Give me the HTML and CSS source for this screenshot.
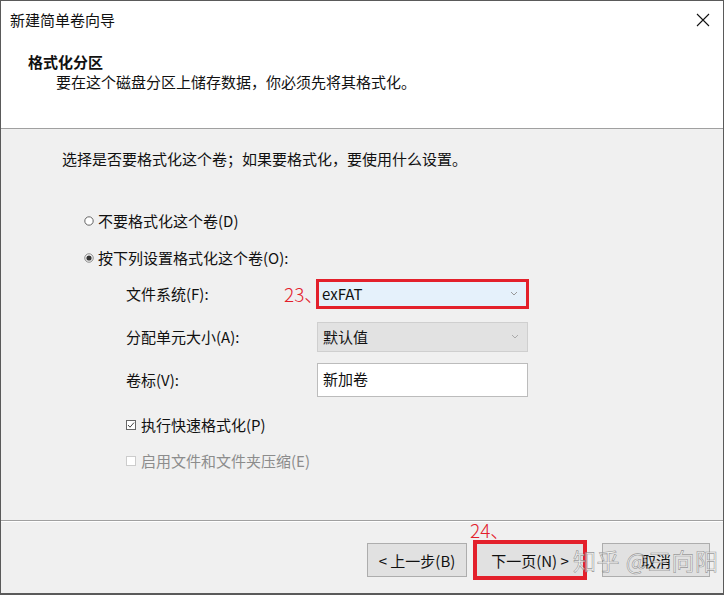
FILE: index.html
```html
<!DOCTYPE html>
<html lang="zh-CN">
<head>
    <meta charset="UTF-8">
    <meta name="viewport" content="width=device-width, initial-scale=1.0">
    <title>新建简单卷向导</title>
    <link rel="stylesheet" href="styles.css">
</head>
<body>

<div class="window">
    <div class="titlebar">
        <span class="title">新建简单卷向导</span>
        <svg class="close" width="14" height="14" viewBox="0 0 14 14">
            <path d="M1 1 L13 13 M13 1 L1 13" stroke="#111" stroke-width="1.1" fill="none"/>
        </svg>
    </div>

    <div class="header">
        <div class="heading">格式化分区</div>
        <div class="subheading">要在这个磁盘分区上储存数据，你必须先将其格式化。</div>
    </div>

    <div class="content">
        <p class="intro">选择是否要格式化这个卷；如果要格式化，要使用什么设置。</p>

        <div class="option">
            <svg class="radio" width="10" height="10" viewBox="0 0 10 10">
                <circle cx="5" cy="5" r="4.2" fill="#fff" stroke="#555" stroke-width="0.9"/>
            </svg>
            <span>不要格式化这个卷(D)</span>
        </div>
        <div class="option">
            <svg class="radio" width="10" height="10" viewBox="0 0 10 10">
                <circle cx="5" cy="5" r="4.2" fill="#fff" stroke="#777" stroke-width="0.9"/>
                <circle cx="5" cy="5" r="2.6" fill="#333"/>
            </svg>
            <span>按下列设置格式化这个卷(O):</span>
        </div>

        <div class="settings">
            <label>文件系统(F):</label>
            <div class="field">
                <span class="note note-fs">23、</span>
                <div class="select marked">
                    <span>exFAT</span>
                    <svg class="chevron" width="8" height="5" viewBox="0 0 8 5"><path d="M1 1 L4 4 L7 1" stroke="#999" fill="none"/></svg>
                </div>
            </div>

            <label>分配单元大小(A):</label>
            <div class="field">
                <div class="select disabled">
                    <span>默认值</span>
                    <svg class="chevron" width="8" height="5" viewBox="0 0 8 5"><path d="M1 1 L4 4 L7 1" stroke="#aaa" fill="none"/></svg>
                </div>
            </div>

            <label>卷标(V):</label>
            <div class="field">
                <div class="textbox">新加卷</div>
            </div>
        </div>

        <div class="check">
            <svg class="box" width="10" height="10" viewBox="0 0 10 10">
                <rect x="0.5" y="0.5" width="9" height="9" fill="#fff" stroke="#666"/>
                <path d="M2 5 L4 7.2 L8 2.6" stroke="#444" stroke-width="1" fill="none"/>
            </svg>
            <span>执行快速格式化(P)</span>
        </div>
        <div class="check disabled-text">
            <svg class="box" width="10" height="10" viewBox="0 0 10 10">
                <rect x="0.5" y="0.5" width="9" height="9" fill="#fff" stroke="#ccc"/>
            </svg>
            <span>启用文件和文件夹压缩(E)</span>
        </div>
    </div>

    <div class="footer">
        <span class="note note-next">24、</span>
        <button class="btn">&lt; 上一步(B)</button>
        <button class="btn marked-btn">下一页(N) &gt;</button>
        <button class="btn cancel">取消</button>
        <span class="watermark">知乎 @三向阳</span>
    </div>
</div>

</body>
</html>
```

FILE: styles.css
```css
* {
    box-sizing: border-box;
}
body {
    margin: 0;
    font-family: "Noto Sans CJK SC", "Microsoft YaHei", sans-serif;
    font-size: 15px;
    color: #111;
    background: #fff;
}
.window {
    width: 724px;
    height: 595px;
    border: 1px solid #5a5a5a;
    border-bottom-width: 2px;
    display: flex;
    flex-direction: column;
    background: #f0f0f0;
    position: relative;
    overflow: hidden;
}
.titlebar {
    height: 37px;
    background: #fff;
    display: flex;
    align-items: center;
    justify-content: space-between;
    padding: 0 13px 0 9px;
}
.title {
    line-height: 20px;
}
.header {
    height: 91px;
    background: #fff;
    border-bottom: 1px solid #a0a0a0;
    padding: 14px 0 0 27px;
}
.heading {
    font-weight: bold;
    line-height: 20px;
}
.subheading {
    line-height: 20px;
    padding-left: 28px;
}
.content {
    flex: 1;
    padding: 20px 0 0 61px;
}
.intro {
    margin: 0;
    line-height: 20px;
}
.option {
    display: flex;
    align-items: center;
    gap: 4px;
    line-height: 20px;
    margin-left: 22px;
    margin-top: 17px;
}
.option:first-of-type {
    margin-top: 42px;
}
.settings {
    display: grid;
    grid-template-columns: 191px 211px;
    grid-auto-rows: 43px;
    align-items: center;
    margin: 4px 0 0 64px;
}
.field {
    position: relative;
}
.select {
    height: 30px;
    display: flex;
    align-items: center;
    justify-content: space-between;
    padding: 0 8px 0 5px;
    border: 1px solid #ccc;
}
.select.marked {
    background: #e5f1fb;
    border: 3px solid #e3202b;
    margin-left: -1px;
    width: 213px;
    padding-left: 3px;
}
.select.disabled {
    background: #e2e2e2;
    border-color: #cfcfcf;
}
.textbox {
    height: 34px;
    background: #fff;
    border: 1px solid #bcbcbc;
    padding: 5px 5px 0;
    line-height: 20px;
}
.note {
    position: absolute;
    color: #e3202b;
    font-family: "Noto Sans CJK SC", sans-serif;
    font-size: 19px;
    font-weight: 300;
    line-height: 22px;
    white-space: nowrap;
}
.note-fs {
    left: -33px;
    top: 4px;
}
.check {
    display: flex;
    align-items: center;
    gap: 5px;
    line-height: 20px;
    margin-left: 64px;
    margin-top: 14px;
}
.check + .check {
    margin-top: 16px;
}
.disabled-text {
    color: #8c8c8c;
}
.footer {
    height: 73px;
    border-top: 1px solid #a0a0a0;
    box-shadow: inset 0 1px 0 #fff;
    display: flex;
    align-items: flex-start;
    padding: 22px 0 0 366px;
    position: relative;
}
.btn {
    font-family: inherit;
    font-size: 15px;
    color: #111;
    height: 34px;
    width: 100px;
    background: #e1e1e1;
    border: 1px solid #adadad;
    padding: 0;
}
.marked-btn {
    width: 114px;
    height: 40px;
    margin: -3px 0 0 6px;
    border: 4px solid #e3202b;
}
.cancel {
    width: 108px;
    margin-left: 15px;
}
.note-next {
    left: 469px;
    top: -2px;
}
.watermark {
    position: absolute;
    left: 572px;
    top: 22px;
    font-size: 23px;
    line-height: 34px;
    white-space: nowrap;
    color: rgba(255, 255, 255, 0.55);
    -webkit-text-stroke: 0.6px rgba(120, 120, 120, 0.75);
    letter-spacing: 0.5px;
}
```
